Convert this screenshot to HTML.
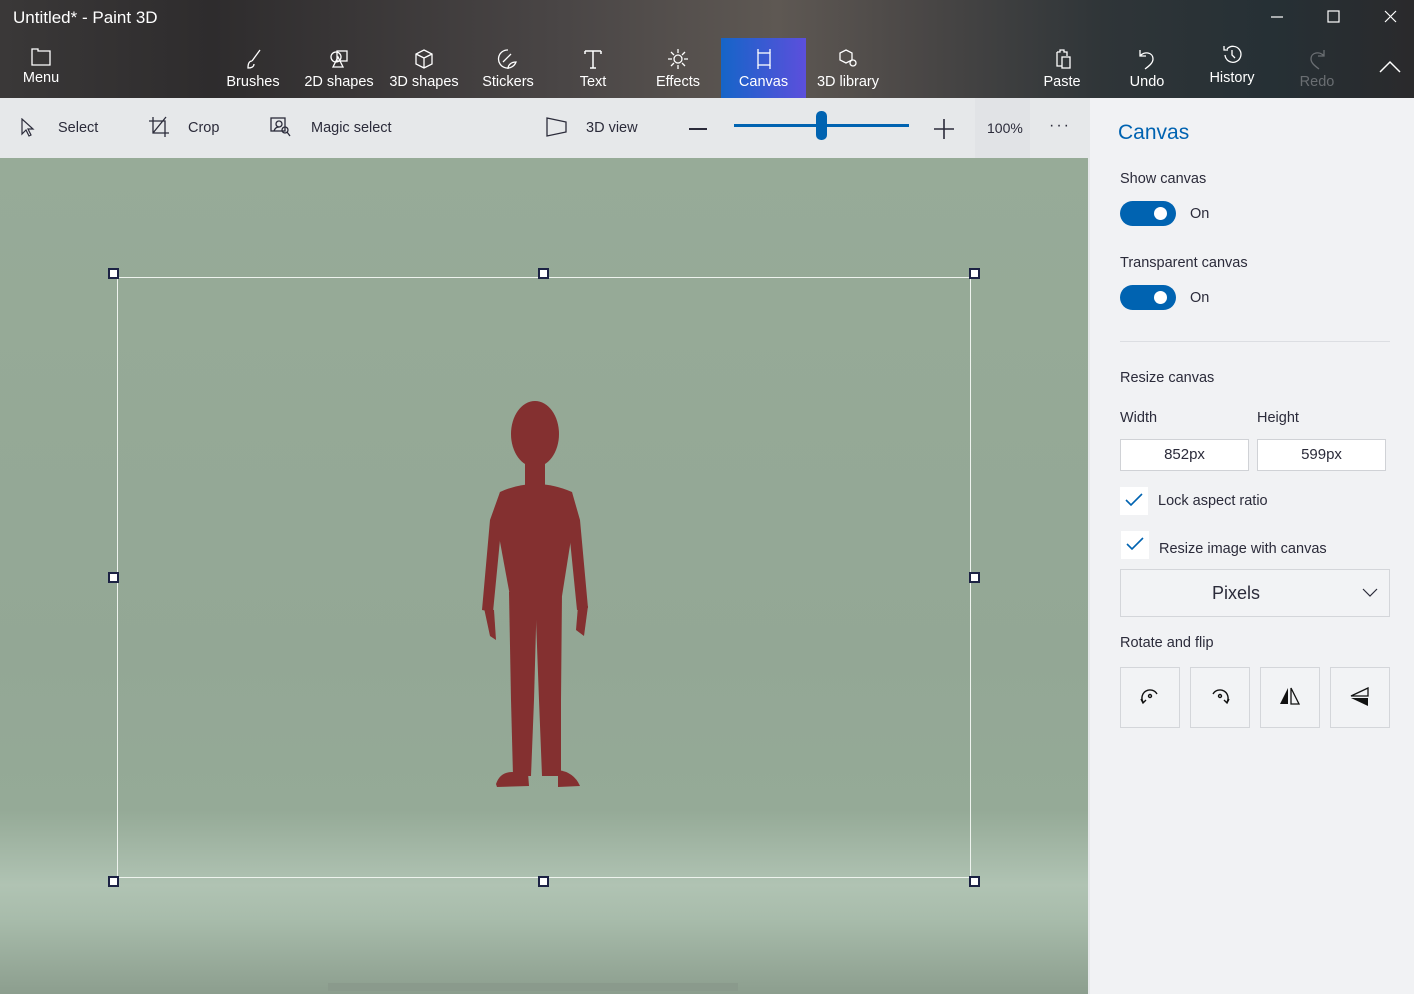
<!DOCTYPE html>
<html><head><meta charset="utf-8"><style>
*{margin:0;padding:0;box-sizing:border-box}
body{width:1414px;height:994px;overflow:hidden;font-family:"Liberation Sans",sans-serif;position:relative;background:#f1f2f4}
.top{position:absolute;left:0;top:0;width:1414px;height:98px;background:linear-gradient(90deg,#3a3838 0%,#2e2c2d 15%,#4a4646 40%,#5e5853 55%,#4a4746 65%,#2f3538 78%,#263035 90%,#2a2a2c 100%)}
.title{position:absolute;left:13px;top:8px;color:#fff;font-size:17px}
.tb{position:absolute;color:#fff;font-size:14.5px;text-align:center;top:38px;height:60px}
.tb svg{position:absolute;left:50%;top:10px;transform:translateX(-50%)}
.tb span{position:absolute;left:0;right:0;top:36px}
.bar{position:absolute;left:0;top:98px;width:1090px;height:60px;background:#e6e8ea}
.bar .t{position:absolute;top:22px;font-size:14.5px;color:#2b2b3a}
.canvas{position:absolute;left:0;top:158px;width:1090px;height:836px;background:linear-gradient(180deg,#97ab98 0%,#93a795 60%,#95aa97 78%,#b0c3b3 87%,#a8bcab 91%,#8c9e8e 100%)}
.panel{position:absolute;left:1090px;top:98px;width:324px;height:896px;background:#f1f2f4}
.lbl{position:absolute;font-size:14.5px;color:#2b2b3a}
.tog{position:absolute;width:56px;height:25px;border-radius:13px;background:#0063b1}
.tog:after{content:"";position:absolute;right:9px;top:6px;width:13px;height:13px;border-radius:50%;background:#fff}
.inp{position:absolute;top:439px;width:129px;height:32px;background:#fff;border:1px solid #d0d2d6;text-align:center;font-size:15px;line-height:30px;color:#2b2b3a}
.chk{position:absolute;width:28px;height:28px;background:#fff}
.rb{position:absolute;top:667px;width:60px;height:61px;border:1px solid #d4d6da;background:#f2f3f5}
.h{position:absolute;width:11px;height:11px;border:2px solid #1c2244;background:#fff}
</style></head><body>
<div class="top"></div>
<div class="title">Untitled* - Paint 3D</div>
<svg style="position:absolute;left:1270px;top:8px" width="130" height="20" stroke="#fff" fill="none" stroke-width="1.2"><line x1="1" y1="9" x2="13" y2="9"/><rect x="58" y="3" width="11" height="11"/><path d="M115 3l11 11M126 3l-11 11"/></svg>

<div class="tb" style="left:10px;width:62px"><svg width="22" height="20" stroke="#fff" fill="none" stroke-width="1.3" style="top:8px"><path d="M2 3h6v2h12v14H2z"/></svg><span style="top:32px">Menu</span></div>
<div class="tb" style="left:222px;width:62px"><svg width="22" height="22" stroke="#fff" fill="none" stroke-width="1.3"><path d="M18 2l-8 11M10 13c-3 0-4 3-4 7 3 0 6-1 6-4"/></svg><span>Brushes</span></div>
<div class="tb" style="left:303px;width:72px"><svg width="22" height="22" stroke="#fff" fill="none" stroke-width="1.3"><circle cx="8" cy="9" r="5"/><rect x="9" y="3" width="10" height="10"/><path d="M10 9l-5 10h10z"/></svg><span>2D shapes</span></div>
<div class="tb" style="left:388px;width:72px"><svg width="22" height="22" stroke="#fff" fill="none" stroke-width="1.3"><path d="M11 2l8 4v10l-8 4-8-4V6zM3 6l8 4 8-4M11 10v10"/></svg><span>3D shapes</span></div>
<div class="tb" style="left:477px;width:62px"><svg width="22" height="22" stroke="#fff" fill="none" stroke-width="1.3"><path d="M11 2a9 9 0 1 0 8 12c-5 0-8 3-8 7M6 14l8-8"/></svg><span>Stickers</span></div>
<div class="tb" style="left:565px;width:56px"><svg width="22" height="22" stroke="#fff" fill="none" stroke-width="1.5"><path d="M3 3h16M11 3v17M8 20h6M3 3v3M19 3v3"/></svg><span>Text</span></div>
<div class="tb" style="left:650px;width:56px"><svg width="22" height="22" stroke="#fff" fill="none" stroke-width="1.3"><circle cx="11" cy="11" r="4"/><path d="M11 1v4M11 17v4M1 11h4M17 11h4M4 4l3 3M15 15l3 3M4 18l3-3M15 7l3-3"/></svg><span>Effects</span></div>
<div class="tb" style="left:721px;width:85px;background:linear-gradient(90deg,#1565c8,#5c4fdc)"><svg width="22" height="22" stroke="#fff" fill="none" stroke-width="1.3"><rect x="5" y="5" width="12" height="12"/><path d="M5 1v4M17 1v4M5 17v4M17 17v4"/></svg><span>Canvas</span></div>
<div class="tb" style="left:812px;width:72px"><svg width="22" height="22" stroke="#fff" fill="none" stroke-width="1.3"><path d="M9 2l6 3v7l-6 3-6-3V5z"/><circle cx="16" cy="15" r="3"/></svg><span>3D library</span></div>
<div class="tb" style="left:1035px;width:54px"><svg width="22" height="22" stroke="#fff" fill="none" stroke-width="1.3"><path d="M6 4h3V2h4v2h3v4M6 4v14h5"/><rect x="11" y="9" width="8" height="11"/></svg><span>Paste</span></div>
<div class="tb" style="left:1120px;width:54px"><svg width="22" height="22" stroke="#fff" fill="none" stroke-width="1.3"><path d="M4 2v6h6M4 8c4-5 13-4 13 3 0 4-4 7-8 10"/></svg><span>Undo</span></div>
<div class="tb" style="left:1202px;width:60px"><svg width="22" height="22" stroke="#fff" fill="none" stroke-width="1.3" style="top:6px"><path d="M4 11a8 8 0 1 0 2-6M3 2v4h4M11 6v5l3 3"/></svg><span style="top:32px">History</span></div>
<div class="tb" style="left:1290px;width:54px;color:#6a6e72"><svg width="22" height="22" stroke="#6a6e72" fill="none" stroke-width="1.3"><path d="M18 2v6h-6M18 8c-4-5-13-4-13 3 0 4 4 7 8 10"/></svg><span>Redo</span></div>
<svg style="position:absolute;left:1379px;top:60px" width="22" height="14" stroke="#fff" fill="none" stroke-width="1.5"><path d="M1 12l10-10 10 10"/></svg>

<div class="bar">
<svg style="position:absolute;left:20px;top:20px" width="16" height="20" stroke="#2b2b3a" fill="none" stroke-width="1.2"><path d="M2 1v15l4-4 3 6 2-1-3-6h5z"/></svg>
<div class="t" style="left:58px">Select</div>
<svg style="position:absolute;left:148px;top:18px" width="22" height="22" stroke="#2b2b3a" fill="none" stroke-width="1.3"><path d="M5 1v16h16M1 5h16v16M18 1L5 17"/></svg>
<div class="t" style="left:188px">Crop</div>
<svg style="position:absolute;left:270px;top:19px" width="22" height="20" stroke="#2b2b3a" fill="none" stroke-width="1.3"><rect x="1" y="1" width="14" height="13"/><circle cx="9" cy="7" r="3"/><circle cx="15" cy="13" r="3"/><path d="M17 15l3 4M4 14c1-3 3-4 5-4"/></svg>
<div class="t" style="left:311px">Magic select</div>
<svg style="position:absolute;left:546px;top:19px" width="22" height="20" stroke="#2b2b3a" fill="none" stroke-width="1.3"><path d="M1 1l19 4v10l-19 4z"/></svg>
<div class="t" style="left:586px">3D view</div>
<div style="position:absolute;left:689px;top:30px;width:18px;height:1.5px;background:#2b2b3a"></div>
<div style="position:absolute;left:734px;top:26px;width:175px;height:3px;background:#0063b1"></div>
<div style="position:absolute;left:816px;top:13px;width:11px;height:29px;border-radius:5px;background:#0063b1"></div>
<svg style="position:absolute;left:933px;top:20px" width="22" height="22" stroke="#2b2b3a" stroke-width="1.6"><path d="M11 1v20M1 11h20"/></svg>
<div style="position:absolute;left:975px;top:0;width:55px;height:60px;background:#e1e3e6"></div>
<div class="t" style="left:987px;font-size:14px">100%</div>
<div class="t" style="left:1049px;top:19px;letter-spacing:2px;font-size:16px">···</div>
</div>

<div class="canvas"></div>
<div style="position:absolute;left:117px;top:277px;width:854px;height:601px;border:1px solid #eef3ee"></div>
<div class="h" style="left:108px;top:268px"></div><div class="h" style="left:538px;top:268px"></div><div class="h" style="left:969px;top:268px"></div>
<div class="h" style="left:108px;top:572px"></div><div class="h" style="left:969px;top:572px"></div>
<div class="h" style="left:108px;top:876px"></div><div class="h" style="left:538px;top:876px"></div><div class="h" style="left:969px;top:876px"></div>
<div style="position:absolute;left:328px;top:983px;width:410px;height:8px;background:#8a9a8c"></div>
<div style="position:absolute;left:1088px;top:158px;width:2px;height:836px;background:#e6e8ea"></div>

<svg style="position:absolute;left:0;top:0" width="1090" height="994">
<g fill="#843030">
<ellipse cx="535" cy="434" rx="24" ry="33"/>
<rect x="525" y="460" width="20" height="28"/>
<path d="M500 492 Q535 476 572 492 L574 520 L562 596 L510 596 L496 520Z"/>
<path d="M500 492 L490 520 L482 610 L493 612 L500 540 L506 505Z"/>
<path d="M572 492 L580 520 L588 608 L577 610 L570 540 L564 505Z"/>
<path d="M484 608 L494 610 L496 640 L490 636 Z"/>
<path d="M578 606 L588 606 L584 636 L576 630Z"/>
<path d="M509 592 L537 592 L534 700 L531 776 L513 776 L511 700Z"/>
<path d="M535 592 L562 592 L561 700 L561 776 L542 776 L539 700Z"/>
<path d="M496 784 Q500 772 512 772 L528 773 L529 786 L497 787Z"/>
<path d="M558 770 Q574 772 580 786 L558 787Z"/>
</g>
</svg>

<div class="panel"></div>
<div style="position:absolute;left:1118px;top:121px;font-size:21px;color:#0063b1">Canvas</div>
<div class="lbl" style="left:1120px;top:171px">Show canvas</div>
<div class="tog" style="left:1120px;top:201px"></div><div class="lbl" style="left:1190px;top:206px">On</div>
<div class="lbl" style="left:1120px;top:255px">Transparent canvas</div>
<div class="tog" style="left:1120px;top:285px"></div><div class="lbl" style="left:1190px;top:290px">On</div>
<div style="position:absolute;left:1120px;top:341px;width:270px;height:1px;background:#dcdee2"></div>
<div class="lbl" style="left:1120px;top:370px">Resize canvas</div>
<div class="lbl" style="left:1120px;top:410px">Width</div>
<div class="lbl" style="left:1257px;top:410px">Height</div>
<div class="inp" style="left:1120px">852px</div>
<div class="inp" style="left:1257px">599px</div>
<div class="chk" style="left:1120px;top:487px"></div>
<svg style="position:absolute;left:1124px;top:492px" width="20" height="16" stroke="#0063b1" fill="none" stroke-width="1.6"><path d="M2 8l5 5 11-11"/></svg>
<div class="lbl" style="left:1158px;top:493px">Lock aspect ratio</div>
<div class="chk" style="left:1121px;top:531px"></div>
<svg style="position:absolute;left:1125px;top:536px" width="20" height="16" stroke="#0063b1" fill="none" stroke-width="1.6"><path d="M2 8l5 5 11-11"/></svg>
<div class="lbl" style="left:1159px;top:541px">Resize image with canvas</div>
<div style="position:absolute;left:1120px;top:569px;width:270px;height:48px;border:1px solid #d4d6da;background:#f2f3f5"></div>
<div style="position:absolute;left:1212px;top:583px;font-size:18px;color:#2b2b3a">Pixels</div>
<svg style="position:absolute;left:1362px;top:588px" width="16" height="10" stroke="#2b2b3a" fill="none" stroke-width="1.2"><path d="M1 1l7 7 7-7"/></svg>
<div class="lbl" style="left:1120px;top:635px">Rotate and flip</div>
<div class="rb" style="left:1120px"></div><div class="rb" style="left:1190px"></div><div class="rb" style="left:1260px"></div><div class="rb" style="left:1330px"></div>
<svg style="position:absolute;left:1139px;top:686px" width="22" height="22" stroke="#111" fill="none" stroke-width="1.4"><path d="M18 8A8 8 0 1 0 4 16"/><circle cx="11" cy="10" r="1.5"/><path d="M2 13l2 4 3-3"/></svg>
<svg style="position:absolute;left:1209px;top:686px" width="22" height="22" stroke="#111" fill="none" stroke-width="1.4"><path d="M4 8A8 8 0 1 1 18 16"/><circle cx="11" cy="10" r="1.5"/><path d="M20 13l-2 4-3-3"/></svg>
<svg style="position:absolute;left:1279px;top:686px" width="22" height="20"><path d="M9 2L1 18h8z" fill="#111"/><path d="M12 2l8 16h-8z" fill="none" stroke="#111" stroke-width="1.3"/></svg>
<svg style="position:absolute;left:1349px;top:686px" width="22" height="22"><path d="M19 2L2 10h17z" fill="none" stroke="#111" stroke-width="1.3"/><path d="M19 12H2l17 8z" fill="#111"/></svg>
</body></html>
